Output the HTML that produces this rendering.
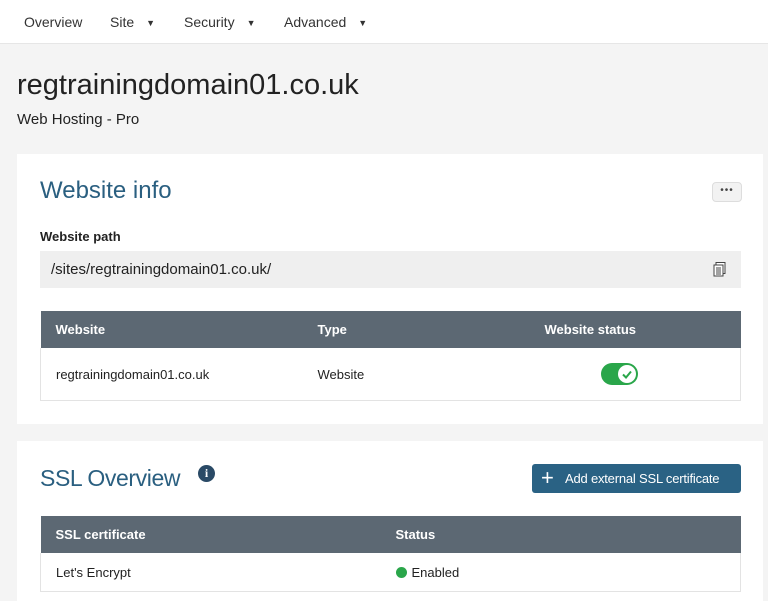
<!DOCTYPE html>
<html><head><style>
body{margin:0;width:768px;height:596px;overflow:hidden;background:#f4f4f4;font-family:"Liberation Sans",sans-serif;color:#222}
.nav{height:43px;background:#fff;border-bottom:1px solid #e6e6e6;position:relative;font-size:14px;color:#333}
.nav > span{position:absolute;top:14px;white-space:nowrap}
.tri{font-size:9px;margin-left:12px;vertical-align:1px}
h1{position:absolute;left:17px;top:69px;margin:0;font-size:29px;font-weight:normal;color:#222}
.sub{position:absolute;left:17px;top:111px;font-size:15px}
.card{position:absolute;left:17px;width:746px;background:#fff}
.h2{position:absolute;left:23px;margin:0;font-size:24px;color:#2a5f80;font-weight:normal}
table{position:absolute;left:23px;width:701px;border-collapse:collapse;font-size:13px}
th{background:#5c6873;color:#fff;text-align:left;font-weight:bold;height:37px;padding:0 15px}
td{height:52px;padding:0 15px;border-bottom:1px solid #e3e3e3}
tr td:first-child{border-left:1px solid #e3e3e3}
tr td:last-child{border-right:1px solid #e3e3e3}
</style></head><body>
<div class="nav">
<span style="left:24px">Overview</span>
<span style="left:110px">Site<span class="tri">▼</span></span>
<span style="left:184px">Security<span class="tri">▼</span></span>
<span style="left:284px">Advanced<span class="tri">▼</span></span>
</div>
<h1>regtrainingdomain01.co.uk</h1>
<div class="sub">Web Hosting - Pro</div>
<div class="card" style="top:154px;height:270px">
<div class="h2" style="top:23px">Website info</div>
<div style="position:absolute;left:695px;top:28px;width:28px;height:18px;border:1px solid #ddd;border-radius:4px;background:#f2f2f2;font-size:10px;text-align:center;line-height:16px;color:#444;letter-spacing:1px">•••</div>
<div style="position:absolute;left:23px;top:75px;font-size:13px;font-weight:bold">Website path</div>
<div style="position:absolute;left:23px;top:97px;width:701px;height:37px;background:#efefef;font-size:15px;line-height:37px"><span style="margin-left:11px">/sites/regtrainingdomain01.co.uk/</span>
<svg style="position:absolute;right:15px;top:11px" width="13" height="15" viewBox="0 0 13 15"><rect x="3" y="0.5" width="9" height="11" fill="#fff" stroke="#444"/><rect x="1" y="3" width="9" height="11" fill="#fff" stroke="#444"/><path d="M3 6h5M3 8h5M3 10h5M3 12h5" stroke="#444"/></svg></div>
<table style="top:157px"><tr><th style="width:232px">Website</th><th style="width:197px">Type</th><th>Website status</th></tr>
<tr><td>regtrainingdomain01.co.uk</td><td>Website</td><td><div style="margin-left:56px;width:37px;height:22px;border-radius:11px;background:#2aa64a;position:relative"><div style="position:absolute;right:2px;top:2px;width:18px;height:18px;border-radius:50%;background:#fff"><svg width="18" height="18"><path d="M5 9.5l3 3 5-6" stroke="#2aa64a" stroke-width="2" fill="none"/></svg></div></div></td></tr></table>
</div>
<div class="card" style="top:441px;height:160px">
<div class="h2" style="top:24px;font-size:23px;letter-spacing:-0.4px">SSL Overview</div>
<div style="position:absolute;left:181px;top:24px;width:17px;height:17px;border-radius:50%;background:#2a4a66;color:#fff;font:bold 12px 'Liberation Serif',serif;text-align:center;line-height:17px">i</div>
<div style="position:absolute;left:515px;top:23px;width:209px;height:29px;border-radius:3px;background:#2a6284;color:#fff;font-size:13px;line-height:29px;white-space:nowrap"><span style="font-size:22px;position:absolute;left:9px;top:-1px">+</span><span style="position:absolute;left:33px;letter-spacing:-0.2px">Add external SSL certificate</span></div>
<table style="top:75px"><tr><th style="width:310px">SSL certificate</th><th>Status</th></tr>
<tr><td style="height:38px">Let's Encrypt</td><td style="height:38px"><span style="display:inline-block;width:11px;height:11px;border-radius:50%;background:#2aa64a;vertical-align:-1px;margin-right:5px"></span>Enabled</td></tr></table>
</div>
</body></html>
